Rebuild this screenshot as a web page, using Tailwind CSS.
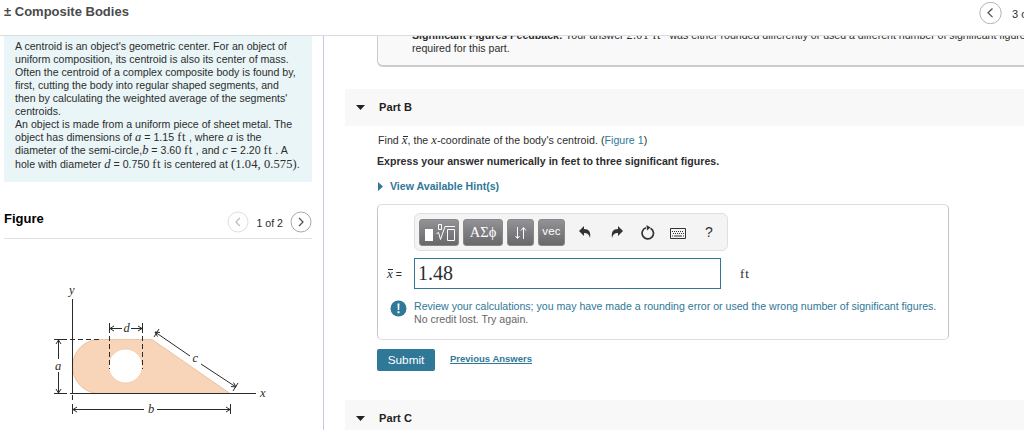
<!DOCTYPE html>
<html lang="en">
<head>
  <meta charset="UTF-8">
  <meta name="viewport" content="width=device-width, initial-scale=1.0">
  <title>Composite Bodies</title>
  <script src="https://cdn.jsdelivr.net/npm/@tailwindcss/browser@4"></script>
</head>
<body class="w-[1024px] h-[430px] overflow-hidden bg-white font-['Liberation_Sans',Arial,sans-serif] text-[10.6px] leading-[13px] text-[#2d2d2d] whitespace-nowrap">
  <header class="h-9 border-b border-[#dcdcdc] flex justify-between">
    <h1 class="pl-1 pt-[3px] text-[13px] leading-[18px] font-bold text-[#4a4a4a]">± Composite Bodies</h1>
    <div class="flex w-[45px] pt-0.5 overflow-hidden">
      <svg class="w-[23px] h-[23px] shrink-0" viewBox="0 0 23 23" fill="none">
        <circle cx="11.5" cy="11" r="10.7" stroke="#b5b5b5"/>
        <path d="M13.5 6.5 9 10.8l4.500 4.300" stroke="#555" stroke-width="1.300"/>
      </svg>
      <span class="pl-[10px] pt-[6px] text-[11px]">3 of 6</span>
    </div>
  </header>

  <div class="flex h-[394px]">
    <!-- Problem statement and figure -->
    <aside class="w-[324px] shrink-0 border-r border-[#c5cbdc] pl-1 pr-[11px]">
      <div class="h-[146px] bg-[#e9f5f7] pl-[11px] pt-1">
        <p>A centroid is an object's geometric center. For an object of</p>
        <p>uniform composition, its centroid is also its center of mass.</p>
        <p>Often the centroid of a complex composite body is found by,</p>
        <p>first, cutting the body into regular shaped segments, and</p>
        <p>then by calculating the weighted average of the segments'</p>
        <p>centroids.</p>
        <p>An object is made from a uniform piece of sheet metal. The</p>
        <p class="h-[13px] leading-[12px] tracking-[.02px]">object has dimensions of <i class="font-['Liberation_Serif',serif] text-[12.500px]">a</i> = 1.15 <span class="font-['Liberation_Serif',serif] text-[12.500px] tracking-[.6px]">ft</span> , where <i class="font-['Liberation_Serif',serif] text-[12.500px]">a</i> is the</p>
        <p class="h-[13px] leading-[12px]">diameter of the semi-circle,<i class="font-['Liberation_Serif',serif] text-[12.500px]">b</i> = 3.60 <span class="font-['Liberation_Serif',serif] text-[12.500px] tracking-[.6px]">ft</span> , and <i class="font-['Liberation_Serif',serif] text-[12.500px]">c</i> = 2.20 <span class="font-['Liberation_Serif',serif] text-[12.500px] tracking-[.6px]">ft</span> . A</p>
        <p class="h-[13px] leading-[12px] mt-px tracking-[.02px]">hole with diameter <i class="font-['Liberation_Serif',serif] text-[12.500px]">d</i> = 0.750 <span class="font-['Liberation_Serif',serif] text-[12.500px] tracking-[.6px]">ft</span> is centered at <span class="font-['Liberation_Serif',serif] text-[12.500px] tracking-[.1px]">(1.04, 0.575)</span>.</p>
      </div>

      <div class="mt-[27px] h-[30px] border-b border-[#e2e2e2] flex justify-between">
        <h2 class="pt-px text-[13px] leading-[18px] font-bold text-black">Figure</h2>
        <div class="flex gap-[7px] pt-[2px]">
          <svg class="w-[22px] h-[22px]" viewBox="0 0 22 22" fill="none">
            <circle cx="11" cy="11" r="10" stroke="#dedede"/>
            <path d="M12.800 7 9 11l3.800 4" stroke="#bbb" stroke-width="1.200"/>
          </svg>
          <span class="pt-[6px] text-[10.6px]">1 of 2</span>
          <svg class="w-[22px] h-[22px]" viewBox="0 0 22 22" fill="none">
            <circle cx="11" cy="11" r="10" stroke="#aaa"/>
            <path d="M9 7l4 4-4 4" stroke="#555" stroke-width="1.300"/>
          </svg>
        </div>
      </div>

      <svg class="mt-[41px] ml-9 w-[240px] h-[150px]" viewBox="0 0 240 150" fill="none" stroke="#2b2b2b">
        <path d="M59 59.500H112L190 113.500H59A26.500 27 0 0 1 59 59.500Z" fill="#f8d5b9" stroke="#ecc3a3"/>
        <circle cx="85.500" cy="86" r="17" fill="#fff" stroke="#ecc3a3" stroke-width=".7"/>
        <path d="M32.500 19V114M32 113.500H216"/>
        <path d="M14 59.500H60M14 113.500H32M32.500 115V123M69.500 56V89M102.500 56V89" stroke-dasharray="5 3"/>
        <path d="M14 59.500H23M14 113.500H23M32.500 124V134M190.500 124V134M69.500 43V53M102.500 43V53"/>
        <!-- Dimension lines with open arrow heads -->
        <path d="M18.500 60V79M18.500 92V113M16 64 18.500 60 21 64M16 109 18.500 113 21 109"/>
        <path d="M33 129.500H104M117 129.500H190M37 127 33 129.500 37 132M186 127 190 129.500 186 132"/>
        <path d="M70 48.500H82M91 48.500H102M74 46 70 48.500 74 51M98 46 102 48.500 98 51"/>
        <path d="M115 52 150 76M161 84 196 107M120 52.500 115 52 117.500 56.500M191 106.500 196 107 193.500 102.500M114 57 119 49M193 111 198 103"/>
        <g fill="#2b2b2b" stroke="none" class="font-['Liberation_Serif',serif] text-[12.500px] italic">
          <text x="29" y="14">y</text>
          <text x="220" y="117">x</text>
          <text x="15" y="90">a</text>
          <text x="108" y="133">b</text>
          <text x="152.500" y="82">c</text>
          <text x="83.500" y="52">d</text>
        </g>
      </svg>
    </aside>

    <main class="flex-1 pl-[21px] overflow-hidden">
      <!-- Part A feedback, scrolled under the header -->
      <div class="ml-8 h-[31px] w-[700px] rounded-bl-md border-l border-b-2 border-[#cccccc] bg-[#f9f9f9] pl-[34px] overflow-hidden">
        <div class="-mt-[7px]">
          <p class="h-[13px] tracking-[-.01px]"><b>Significant Figures Feedback:</b> Your answer <span class="font-['Liberation_Serif',serif] text-[12px] tracking-[.4px]">2.01 ft</span> &nbsp; was either rounded differently or used a different number of significant figures than</p>
          <p>required for this part.</p>
        </div>
      </div>

      <div class="mt-[22px] h-[37px] bg-[#f8f8f8] flex items-center pl-[11px] gap-[14px]">
        <svg class="w-[9px] h-[5px]" viewBox="0 0 9 5"><path d="M0 0H9L4.500 5Z" fill="#222"/></svg>
        <h2 class="text-[11px] font-bold text-[#222] tracking-[.1px]">Part B</h2>
      </div>

      <section class="pl-8">
        <p class="mt-2 h-[13px] pl-px tracking-[.05px]">Find <i class="relative font-['Liberation_Serif',serif] text-[12.500px]">x<span class="absolute left-px top-[3px] w-[5px] h-px bg-[#2d2d2d]"></span></i>, the <i class="font-['Liberation_Serif',serif] text-[12.500px]">x</i>-coordinate of the body's centroid. (<a class="text-[#2f7898]">Figure 1</a>)</p>
        <p class="mt-2 font-bold tracking-[.01px]">Express your answer numerically in feet to three significant figures.</p>
        <a class="mt-3 flex items-center gap-[7px] font-bold text-[#2f7898] pl-px">
          <svg class="w-[5px] h-[9px]" viewBox="0 0 5 9"><path d="M0 0V9L5 4.500Z" fill="#2f7898"/></svg>
          View Available Hint(s)
        </a>

        <div class="mt-[11px] w-[572px] h-[136px] rounded-[5px] border border-[#c4c4c4] border-t-[#dedede] border-b-[#dedede] px-2 pt-2">
          <div class="ml-7 w-[314px] h-[38px] rounded-md border border-[#e0e0e0] bg-[#f4f4f4] flex items-center pl-1 text-white">
            <div class="flex gap-1">
              <div class="w-10 h-[27px] rounded-[3px] border border-[#888] bg-linear-to-b from-[#929297] to-[#69696b]">
                <svg class="w-[38px] h-[25px]" viewBox="0 0 38 25" fill="none" stroke="#fff">
                  <path d="M5 9H13V21H5Z" fill="#fff" stroke="none"/>
                  <path d="M18.500 4.500H21.500V9.500H18.500ZM16.500 13.500 18.500 12.500 20.500 19.500 25 6.500H35M27.500 9.500H34.500V20.500H27.500Z"/>
                </svg>
              </div>
              <div class="w-10 h-[27px] rounded-[3px] border border-[#888] bg-linear-to-b from-[#929297] to-[#69696b] text-center font-['Liberation_Serif',serif] text-[14.500px] leading-[24px]">ΑΣϕ</div>
              <div class="w-[27px] h-[27px] rounded-[3px] border border-[#888] bg-linear-to-b from-[#929297] to-[#69696b]">
                <svg class="w-[25px] h-[25px]" viewBox="0 0 25 25" fill="none" stroke="#fff">
                  <path d="M9.500 7V18M7.500 16 9.500 18.500 11.500 16M15.500 19V8M13 10.500 15.500 7.500 18 10.500"/>
                </svg>
              </div>
              <div class="w-[27px] h-[27px] rounded-[3px] border border-[#888] bg-linear-to-b from-[#929297] to-[#69696b] text-center text-[11.500px] leading-[23px] tracking-[.2px]">vec</div>
            </div>
            <svg class="ml-[14px] w-[12px] h-[13px]" viewBox="0 0 12 13"><path d="M0 5 5 0V3C10 3 12 6 11 12 10 8 8 7 5 7V10Z" fill="#333"/></svg>
            <svg class="ml-5 w-[12px] h-[13px]" viewBox="0 0 12 13"><path d="M12 5 7 0V3C2 3 0 6 1 12 2 8 4 7 7 7V10Z" fill="#333"/></svg>
            <svg class="ml-[18px] w-[14px] h-[15px]" viewBox="0 0 14 15"><path d="M9.500 3.200A5.700 5.700 0 1 1 5 2.800" fill="none" stroke="#333" stroke-width="1.700"/><path d="M5.500 0 9.500 2.500 6 5.500Z" fill="#333"/></svg>
            <svg class="ml-[15px] mt-[2px] w-4 h-[11px]" viewBox="0 0 16 11" fill="none" stroke="#333">
              <path d="M.5 .5H15.500V10.500H.5Z"/>
              <path d="M2 3.500H14M3 5.500H14" stroke-dasharray="1 1"/>
              <path d="M2 8H3M4 8H12M13 8H14"/>
            </svg>
            <span class="ml-[19px] text-[14px] text-[#333]">?</span>
          </div>
          <div class="mt-[7px] flex items-center">
            <div class="w-7 pl-px"><i class="relative font-['Liberation_Serif',serif] text-[13px]">x<span class="absolute left-px top-[3px] w-[5px] h-px bg-[#2d2d2d]"></span></i> =</div>
            <div class="w-[307px] h-[31px] border border-[#2f7898] pl-[3px] font-['Liberation_Serif',serif] text-[20px] leading-[29px]">1.48</div>
            <span class="ml-[19px] font-['Liberation_Serif',serif] text-[13px] tracking-[.8px]">ft</span>
          </div>
          <div class="mt-[11px] flex">
            <svg class="ml-1 w-[17px] h-[17px]" viewBox="0 0 17 17"><circle cx="8.500" cy="8.500" r="8" fill="#2f7898"/><path d="M7.500 3.500H9.500L9.200 10H7.800ZM7.500 11.300H9.500V13.300H7.500Z" fill="#fff"/></svg>
            <div class="ml-[7px]">
              <p class="text-[#2f7898]">Review your calculations; you may have made a rounding error or used the wrong number of significant figures.</p>
              <p class="text-[#666]">No credit lost. Try again.</p>
            </div>
          </div>
        </div>

        <div class="mt-[9px] flex">
          <button class="w-[58px] h-[22px] rounded-[2px] bg-[#2f7898] text-white text-[11.800px]">Submit</button>
          <a class="ml-[15px] mt-[3px] text-[9.500px] font-bold underline text-[#2f7898]">Previous Answers</a>
        </div>
      </section>

      <div class="mt-[29px] h-[37px] bg-[#f8f8f8] flex items-center pl-[11px] gap-[14px]">
        <svg class="w-[9px] h-[5px]" viewBox="0 0 9 5"><path d="M0 0H9L4.500 5Z" fill="#222"/></svg>
        <h2 class="text-[11px] font-bold text-[#222] tracking-[.1px]">Part C</h2>
      </div>
    </main>
  </div>
</body>
</html>
